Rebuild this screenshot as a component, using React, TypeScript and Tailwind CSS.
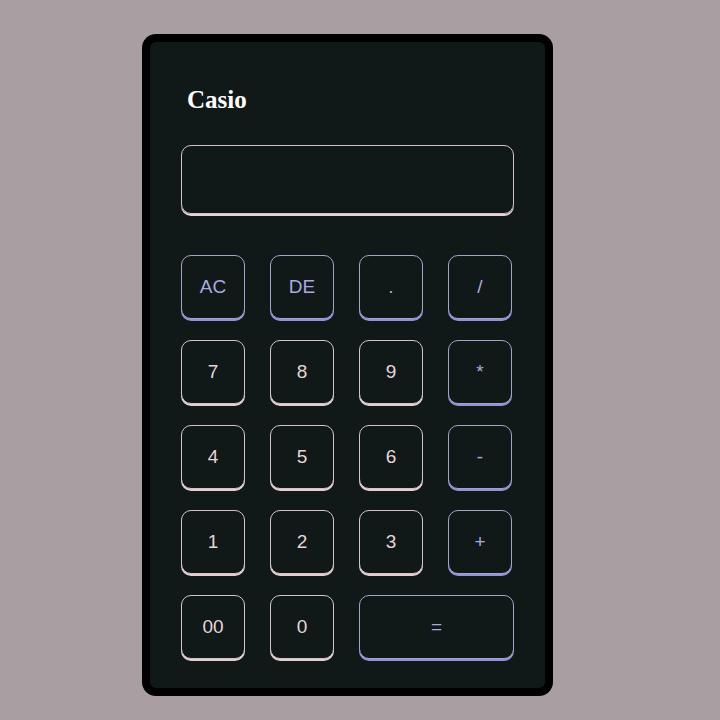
import React from "react";

type Key = { label: string; op?: boolean; wide?: boolean };

const keys: Key[] = [
  { label: "AC", op: true },
  { label: "DE", op: true },
  { label: ".", op: true },
  { label: "/", op: true },
  { label: "7" },
  { label: "8" },
  { label: "9" },
  { label: "*", op: true },
  { label: "4" },
  { label: "5" },
  { label: "6" },
  { label: "-", op: true },
  { label: "1" },
  { label: "2" },
  { label: "3" },
  { label: "+", op: true },
  { label: "00" },
  { label: "0" },
  { label: "=", op: true, wide: true },
];

export default function App() {
  return (
    <div className="min-h-screen w-full bg-[#a99ea1] pt-[34px] pl-[142px]">
      <div className="w-[411px] h-[662px] rounded-[14px] border-[8px] border-black bg-[#111818] px-[31px]">
        <div className="pt-[45px] pl-[6px] text-[25px] font-bold text-white leading-none" style={{ fontFamily: '"Liberation Serif", "Times New Roman", serif' }}>
          Casio
        </div>
        <div className="mt-[33px] h-[69px] w-[333px] rounded-[10px] border-[1.5px] border-[#d4c4c8] shadow-[0_2px_0_#e8d4d8]" />
        <div className="mt-[41px] grid grid-cols-[64px_64px_64px_64px] gap-x-[25px] gap-y-[21px]" style={{ fontFamily: '"Liberation Sans", Arial, sans-serif' }}>
          {keys.map((k) => (
            <button
              key={k.label}
              className={
                k.op
                  ? "h-[64px] rounded-[10px] border-[1.5px] border-[#a2a4cc] shadow-[0_2px_0_#8f94d8] text-[19px] text-[#a8aae0] bg-[#111818] " + (k.wide ? "col-span-2 w-[155px]" : "")
                  : "h-[64px] rounded-[10px] border-[1.5px] border-[#d4c4c8] shadow-[0_2px_0_#e4ced2] text-[19px] text-[#e6d4d8] bg-[#111818]"
              }
            >
              {k.label}
            </button>
          ))}
        </div>
      </div>
    </div>
  );
}
